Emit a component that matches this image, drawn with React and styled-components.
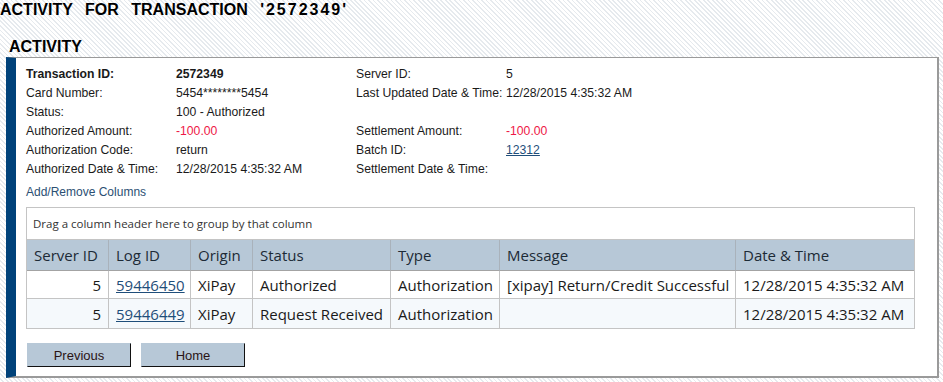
import React from "react";
import styled, { createGlobalStyle } from "styled-components";

const GlobalStyle = createGlobalStyle`
  html, body {
    margin: 0;
    padding: 0;
  }
  body {
    font-family: "Liberation Sans", Arial, sans-serif;
    color: #1a1a1a;
    background-color: #ffffff;
    background-image: repeating-linear-gradient(
      45deg,
      #ffffff 0px,
      #ffffff 2px,
      #e6eaee 2px,
      #e6eaee 3.2px
    );
    min-height: 382px;
  }
`;

const Page = styled.div`
  display: flex;
  flex-direction: column;
`;

const Title = styled.h1`
  margin: 0;
  font-size: 16px;
  line-height: 20px;
  font-weight: bold;
  word-spacing: 8px;
  color: #000;
`;

const TitleId = styled.span`
  letter-spacing: 2px;
`;

const SectionHeading = styled.h2`
  margin: 17px 0 0 9px;
  font-size: 16px;
  line-height: 20px;
  font-weight: bold;
  color: #000;
`;

const Panel = styled.div`
  margin: 0 4px 0 6px;
  background: #fff;
  border-left: 10px solid #00427a;
  border-top: 1px solid #9a9a9a;
  border-right: 2px solid #9a9a9a;
  border-bottom: 2px solid #9a9a9a;
  padding: 7px 23px 9px 10px;
  display: flex;
  flex-direction: column;
  align-items: flex-start;
`;

const InfoGrid = styled.div`
  display: grid;
  grid-template-columns: 150px 180px 150px auto;
  grid-auto-rows: 19px;
  font-size: 12.2px;
  line-height: 19px;
  color: #1a1a1a;
`;

const Cell = styled.div`
  white-space: nowrap;
  font-weight: ${(p) => (p.$bold ? "bold" : "normal")};
  color: ${(p) => (p.$neg ? "#ee1846" : "#1a1a1a")};
`;

const InfoLink = styled.a`
  color: #1f4e7a;
  text-decoration: underline;
`;

const ColumnsLink = styled.a`
  margin-top: 4px;
  font-size: 12px;
  line-height: 19px;
  color: #2b4f73;
  text-decoration: none;
`;

const Grid = styled.div`
  margin-top: 5px;
  width: 889px;
  box-sizing: border-box;
  border: 1px solid #c4c4c4;
  font-family: "Open Sans", "Noto Sans", sans-serif;
`;

const GroupPanel = styled.div`
  height: 31px;
  border-bottom: 1px solid #c4c4c4;
  padding-left: 6px;
  font-size: 11.5px;
  line-height: 31px;
  color: #333;
  background: #fff;
`;

const Table = styled.table`
  width: 887px;
  table-layout: fixed;
  border-collapse: separate;
  border-spacing: 0;
  font-size: 15px;
`;

const HeadCell = styled.th`
  box-sizing: border-box;
  height: 31px;
  padding: 0 7px;
  text-align: left;
  font-weight: normal;
  color: #1c2a36;
  background: #b7c8d7;
  border-bottom: 1px solid #a3a3a3;
  border-right: ${(p) => (p.$last ? "none" : "1px solid #a9b2bb")};
  white-space: nowrap;
`;

const Row = styled.tr`
  background: ${(p) => (p.$alt ? "#f5f9fc" : "#ffffff")};
`;

const BodyCell = styled.td`
  box-sizing: border-box;
  height: ${(p) => (p.$lastRow ? "29px" : "28px")};
  padding: 0 7px;
  text-align: ${(p) => (p.$right ? "right" : "left")};
  color: #1a1a1a;
  border-bottom: ${(p) => (p.$lastRow ? "none" : "1px solid #c4c4c4")};
  border-right: ${(p) => (p.$last ? "none" : "1px solid #c4c4c4")};
  white-space: nowrap;
  overflow: hidden;
`;

const LogLink = styled.a`
  color: #1f4e7a;
  text-decoration: underline;
`;

const ButtonRow = styled.div`
  margin-top: 14px;
  padding-left: 1px;
  display: flex;
  gap: 10px;
`;

const Button = styled.button`
  width: 104px;
  height: 24px;
  padding: 0;
  background: #b7c8d7;
  border-style: solid;
  border-width: 1px;
  border-color: #b7c8d7 #111 #111 #b7c8d7;
  font-family: "Liberation Sans", Arial, sans-serif;
  font-size: 13px;
  color: #2a1414;
  cursor: pointer;
`;

const cols = [82, 82, 62, 138, 109, 236, 178];
const headers = ["Server ID", "Log ID", "Origin", "Status", "Type", "Message", "Date & Time"];

const rows = [
  { server: "5", log: "59446450", origin: "XiPay", status: "Authorized", type: "Authorization", message: "[xipay] Return/Credit Successful", date: "12/28/2015 4:35:32 AM" },
  { server: "5", log: "59446449", origin: "XiPay", status: "Request Received", type: "Authorization", message: "", date: "12/28/2015 4:35:32 AM" },
];

export default function App() {
  return (
    <>
      <GlobalStyle />
      <Page>
        <Title>ACTIVITY FOR TRANSACTION <TitleId>'2572349'</TitleId></Title>
        <SectionHeading>ACTIVITY</SectionHeading>
        <Panel>
          <InfoGrid>
            <Cell $bold>Transaction ID:</Cell>
            <Cell $bold>2572349</Cell>
            <Cell>Server ID:</Cell>
            <Cell>5</Cell>

            <Cell>Card Number:</Cell>
            <Cell>5454********5454</Cell>
            <Cell>Last Updated Date &amp; Time:</Cell>
            <Cell>12/28/2015 4:35:32 AM</Cell>

            <Cell>Status:</Cell>
            <Cell>100 - Authorized</Cell>
            <Cell></Cell>
            <Cell></Cell>

            <Cell>Authorized Amount:</Cell>
            <Cell $neg>-100.00</Cell>
            <Cell>Settlement Amount:</Cell>
            <Cell $neg>-100.00</Cell>

            <Cell>Authorization Code:</Cell>
            <Cell>return</Cell>
            <Cell>Batch ID:</Cell>
            <Cell><InfoLink href="#">12312</InfoLink></Cell>

            <Cell>Authorized Date &amp; Time:</Cell>
            <Cell>12/28/2015 4:35:32 AM</Cell>
            <Cell>Settlement Date &amp; Time:</Cell>
            <Cell></Cell>
          </InfoGrid>
          <ColumnsLink href="#">Add/Remove Columns</ColumnsLink>
          <Grid>
            <GroupPanel>Drag a column header here to group by that column</GroupPanel>
            <Table>
              <colgroup>
                {cols.map((w, i) => (
                  <col key={i} style={{ width: w }} />
                ))}
              </colgroup>
              <thead>
                <tr>
                  {headers.map((h, i) => (
                    <HeadCell key={h} $last={i === headers.length - 1}>{h}</HeadCell>
                  ))}
                </tr>
              </thead>
              <tbody>
                {rows.map((r, ri) => {
                  const lastRow = ri === rows.length - 1;
                  return (
                    <Row key={r.log} $alt={ri % 2 === 1}>
                      <BodyCell $right $lastRow={lastRow}>{r.server}</BodyCell>
                      <BodyCell $lastRow={lastRow}><LogLink href="#">{r.log}</LogLink></BodyCell>
                      <BodyCell $lastRow={lastRow}>{r.origin}</BodyCell>
                      <BodyCell $lastRow={lastRow}>{r.status}</BodyCell>
                      <BodyCell $lastRow={lastRow}>{r.type}</BodyCell>
                      <BodyCell $lastRow={lastRow}>{r.message}</BodyCell>
                      <BodyCell $lastRow={lastRow} $last>{r.date}</BodyCell>
                    </Row>
                  );
                })}
              </tbody>
            </Table>
          </Grid>
          <ButtonRow>
            <Button>Previous</Button>
            <Button>Home</Button>
          </ButtonRow>
        </Panel>
      </Page>
    </>
  );
}
